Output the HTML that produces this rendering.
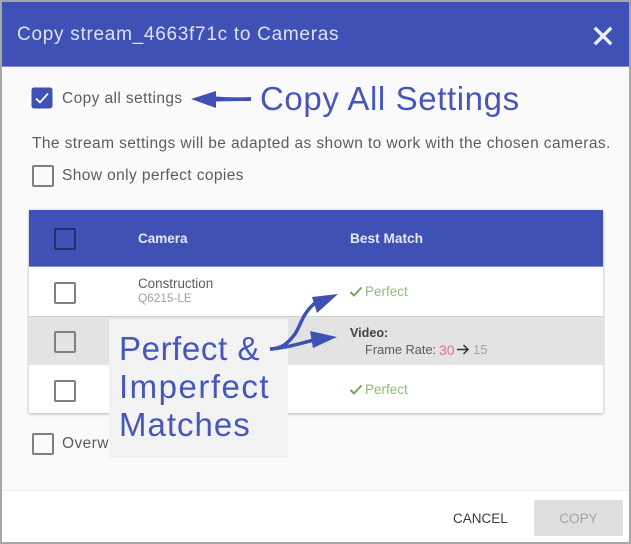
<!DOCTYPE html>
<html>
<head>
<meta charset="utf-8">
<style>
html,body{margin:0;padding:0;}
body{width:631px;height:544px;position:relative;overflow:hidden;background:#a6a6a6;font-family:"Liberation Sans",sans-serif;}
.a{position:absolute;white-space:nowrap;}
.t{color:#5c5c5c;font-size:15.5px;line-height:18px;letter-spacing:.4px;}
.cb{position:absolute;width:18px;height:18px;border:2px solid #7f7f7f;border-radius:2px;box-sizing:content-box;}
.big{color:#4657b9;font-size:33px;line-height:38px;letter-spacing:.6px;}
</style>
</head>
<body>
<div class="a" style="left:2px;top:2px;width:627px;height:540px;background:#fff;"></div>
<div class="a" style="left:2px;top:2px;width:627px;height:64px;background:#3f51b5;"></div>
<div class="a" style="left:2px;top:66px;width:627px;height:424px;background:#fafafa;border-top:1px solid #8390d2;box-sizing:border-box;"></div>
<div class="a" style="left:2px;top:490px;width:627px;height:1px;background:#eeeeee;"></div>

<div class="a" style="left:17px;top:24px;color:#dfe2f3;font-size:19px;line-height:22px;letter-spacing:.72px;">Copy stream_4663f71c to Cameras</div>
<svg class="a" style="left:592px;top:25px;" width="22" height="22" viewBox="0 0 22 22"><path d="M2.800 2.800L19.200 19.200M19.200 2.800L2.800 19.200" stroke="#eef0f9" stroke-width="3.400" fill="none"/></svg>

<svg class="a" style="left:31px;top:87px;" width="22" height="22" viewBox="0 0 22 22"><rect width="21" height="21" x=".5" y=".5" rx="2.5" fill="#3f51b5"/><path d="M5 11.500L9 15.500L17 6.500" stroke="#fff" stroke-width="1.800" fill="none"/></svg>
<div class="a t" style="left:62px;top:90px;">Copy all settings</div>
<svg class="a" style="left:188px;top:88px;" width="66" height="22" viewBox="0 0 66 22"><path d="M3 11L28 3V8.500C40 9.500 52 9.500 63 9V13C52 13 40 13 28 13.500V20Z" fill="#3f51b5"/></svg>
<div class="a big" style="left:260px;top:80px;">Copy All Settings</div>

<div class="a t" style="left:32px;top:135px;">The stream settings will be adapted as shown to work with the chosen cameras.</div>
<div class="cb" style="left:32px;top:165px;"></div>
<div class="a t" style="left:62px;top:167px;">Show only perfect copies</div>

<div class="a" style="left:29px;top:210px;width:574px;height:203px;background:#fff;box-shadow:0 1px 3px rgba(0,0,0,.3);"></div>
<div class="a" style="left:29px;top:210px;width:574px;height:56px;background:#3f51b5;"></div>
<div class="a" style="left:29px;top:266px;width:574px;height:1px;background:#8390d2;"></div>
<div class="a" style="left:29px;top:316px;width:574px;height:49px;background:#e3e3e3;border-top:1px solid #d0d0d0;box-sizing:border-box;"></div>

<div class="cb" style="left:54px;top:228px;border-color:#232d66;"></div>
<div class="cb" style="left:54px;top:282px;"></div>
<div class="cb" style="left:54px;top:331px;"></div>
<div class="cb" style="left:54px;top:380px;"></div>

<div class="a" style="left:138px;top:230px;color:#e6e8f5;font-size:13.500px;line-height:18px;font-weight:bold;">Camera</div>
<div class="a" style="left:350px;top:230px;color:#e6e8f5;font-size:13.700px;line-height:18px;font-weight:bold;">Best Match</div>

<div class="a" style="left:138px;top:276px;color:#5c5c5c;font-size:13.400px;line-height:16px;">Construction</div>
<div class="a" style="left:138px;top:291px;color:#a0a0a0;font-size:11.800px;line-height:15px;">Q6215-LE</div>

<svg class="a" style="left:349px;top:286px;" width="14" height="12" viewBox="0 0 14 12"><path d="M1.500 6L5 9.500L12.500 1.500" stroke="#6fa55f" stroke-width="2" fill="none"/></svg>
<div class="a" style="left:365px;top:284px;color:#8cbb7c;font-size:13.500px;line-height:16px;">Perfect</div>
<div class="a" style="left:350px;top:325px;color:#444;font-size:12.600px;line-height:16px;font-weight:bold;">Video:</div>
<div class="a" style="left:365px;top:342px;color:#5c5c5c;font-size:12.800px;line-height:16px;">Frame Rate:</div>
<div class="a" style="left:439px;top:342px;color:#e57373;font-size:14px;line-height:16px;">30</div>
<svg class="a" style="left:457px;top:343px;" width="13" height="13" viewBox="0 0 13 13"><path d="M0 6.500H11M6.500 2L11 6.500L6.500 11" stroke="#333" stroke-width="1.500" fill="none"/></svg>
<div class="a" style="left:473px;top:342px;color:#8cbb7c;font-size:13px;line-height:16px;">15</div>
<svg class="a" style="left:349px;top:384px;" width="14" height="12" viewBox="0 0 14 12"><path d="M1.500 6L5 9.500L12.500 1.500" stroke="#6fa55f" stroke-width="2" fill="none"/></svg>
<div class="a" style="left:365px;top:382px;color:#8cbb7c;font-size:13.500px;line-height:16px;">Perfect</div>

<div class="cb" style="left:32px;top:433px;"></div>
<div class="a t" style="left:62px;top:435px;">Overwrite</div>

<div class="a" style="left:109px;top:319px;width:179px;height:139px;background:#f2f2f2;"></div>
<div class="a big" style="left:119px;top:330px;">Perfect &amp;</div>
<div class="a big" style="left:119px;top:368px;letter-spacing:1.500px;">Imperfect</div>
<div class="a big" style="left:119px;top:406px;letter-spacing:1px;">Matches</div>

<svg class="a" style="left:268px;top:290px;" width="72" height="62" viewBox="0 0 72 62">
<path d="M2 59C14 59 20 53 27 44C33 35 34 24 47 13" stroke="#3f51b5" stroke-width="3.500" fill="none"/>
<path d="M2 59C18 58 30 54 46 50" stroke="#3f51b5" stroke-width="3.500" fill="none"/>
<path d="M44 7L70 4L49 23Z" fill="#3f51b5"/>
<path d="M42 41L69 47L45 58Z" fill="#3f51b5"/>
</svg>

<div class="a" style="left:453px;top:511px;color:#3a3a3a;font-size:13.500px;line-height:16px;">CANCEL</div>
<div class="a" style="left:534px;top:500px;width:89px;height:36px;background:#dfdfdf;border-radius:2px;color:#a3a3a3;font-size:13.500px;line-height:38px;text-align:center;">COPY</div>
</body>
</html>
